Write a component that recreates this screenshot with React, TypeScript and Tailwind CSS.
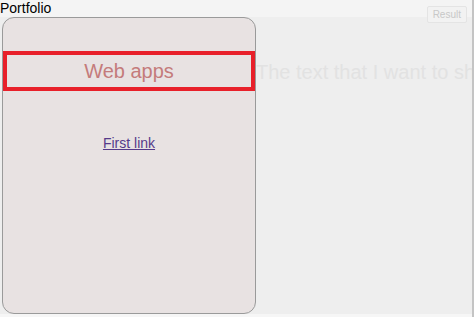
export default function App() {
  return (
    <div className="flex h-[317px] w-[474px] overflow-hidden bg-[#f6f6f6] font-['Liberation_Sans',Arial,sans-serif]">
      <div className="relative flex h-[314px] w-[472px] shrink-0 flex-col overflow-hidden bg-[#eeeeee]">
        <div className="h-[17px] bg-[#f4f4f4] text-[14px] leading-[17px] text-black">Portfolio</div>
        <button className="absolute right-[5px] top-[6px] h-[17px] rounded-[2px] border border-[#e4e4e4] bg-[#f2f2f2] px-[5px] text-[10px] leading-[14px] text-[#c8c8c8]">
          Result
        </button>
        <div className="flex flex-1 items-start">
          <div className="ml-[2px] flex h-[297px] w-[254px] shrink-0 flex-col items-center rounded-[12px] border border-[#9a9a9a] bg-[#e8e2e2]">
            <div className="mt-[33px] flex h-[40px] w-[252px] items-center justify-center border-[4px] border-[#e8202a] text-[20px] text-[#c47b7b]">
              Web apps
            </div>
            <a href="#" className="mt-[42px] text-[14px] text-[#553a8a] underline">
              First link
            </a>
          </div>
          <div className="mt-[40px] whitespace-nowrap text-[20px] text-[#e2e2e2]">The text that I want to show</div>
        </div>
      </div>
      <div className="h-full w-[2px] shrink-0 bg-[#c4c4c4]" />
    </div>
  );
}
